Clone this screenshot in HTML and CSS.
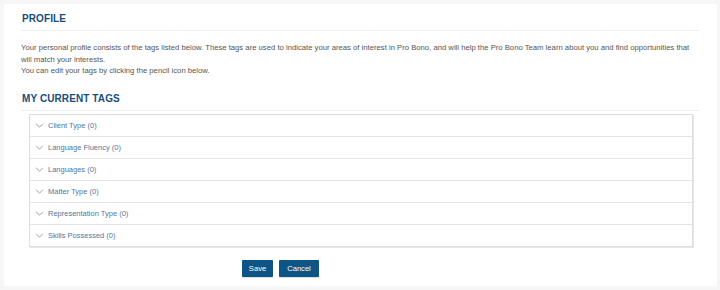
FILE: index.html
```html
<!DOCTYPE html>
<html>
<head>
<meta charset="utf-8">
<link rel="stylesheet" href="styles.css">
</head>
<body>
<div class="card">
  <h1 class="title">PROFILE</h1>
  <div class="rule"></div>
  <p class="intro">Your personal profile consists of the tags listed below. These tags are used to indicate your areas of interest in Pro Bono, and will help the Pro Bono Team learn about you and find opportunities that<br>will match your interests.<br>You can edit your tags by clicking the pencil icon below.</p>
  <h2 class="title sub">MY CURRENT TAGS</h2>
  <div class="rule"></div>
  <div class="accordion">
    <div class="row"><svg class="chev" viewBox="0 0 10 6"><path d="M1 1 L5 5 L9 1"/></svg><span>Client Type (0)</span></div>
    <div class="row"><svg class="chev" viewBox="0 0 10 6"><path d="M1 1 L5 5 L9 1"/></svg><span>Language Fluency (0)</span></div>
    <div class="row"><svg class="chev" viewBox="0 0 10 6"><path d="M1 1 L5 5 L9 1"/></svg><span>Languages (0)</span></div>
    <div class="row"><svg class="chev" viewBox="0 0 10 6"><path d="M1 1 L5 5 L9 1"/></svg><span>Matter Type (0)</span></div>
    <div class="row"><svg class="chev" viewBox="0 0 10 6"><path d="M1 1 L5 5 L9 1"/></svg><span>Representation Type (0)</span></div>
    <div class="row"><svg class="chev" viewBox="0 0 10 6"><path d="M1 1 L5 5 L9 1"/></svg><span>Skills Possessed (0)</span></div>
  </div>
  <div class="actions">
    <button class="btn save">Save</button>
    <button class="btn cancel">Cancel</button>
  </div>
</div>
</body>
</html>
```
FILE: styles.css
```css
html, body {
  margin: 0;
  padding: 0;
  background: #f6f6f6;
}
body {
  padding: 4px 3px 4px 4px;
  font-family: "Liberation Sans", Arial, sans-serif;
}
.card {
  background: #ffffff;
  height: 282px;
  box-sizing: border-box;
  padding: 8px 17px 0 16px;
}
.title {
  margin: 0;
  padding-left: 2px;
  font-size: 10px;
  line-height: 14px;
  font-weight: bold;
  color: #184d7b;
  letter-spacing: 0.1px;
}
.sub {
  margin-top: 15px;
}
.rule {
  height: 1px;
  background: #f0f0f0;
  margin-top: 4px;
}
.intro {
  margin: 11px 0 0 0;
  padding-left: 1px;
  font-size: 7.7px;
  line-height: 11.5px;
  color: #555555;
  white-space: nowrap;
}
.accordion {
  margin: 3px 7px 0 9px;
  border: 1px solid #dedede;
  box-shadow: 1px 1px 0 #e6e6e6;
}
.row {
  height: 21px;
  display: flex;
  align-items: center;
  border-bottom: 1px solid #e3e3e3;
  padding-left: 5px;
  font-size: 7.5px;
  color: #55769a;
}
.row:last-child {
  border-bottom: none;
}
.chev {
  width: 9px;
  height: 5px;
  margin-right: 4px;
  fill: none;
  stroke: #8a8a8a;
  stroke-width: 1;
}
.actions {
  display: flex;
  gap: 6px;
  padding-left: 222px;
  margin-top: 13px;
}
.btn {
  height: 17px;
  padding: 0;
  border: none;
  border-radius: 1px;
  background: #0d5585;
  color: #ffffff;
  font-family: "Liberation Sans", Arial, sans-serif;
  font-size: 7.6px;
  box-shadow: 0 1px 1px rgba(0,0,0,0.15);
}
.save { width: 31px; }
.cancel { width: 40px; }
```
